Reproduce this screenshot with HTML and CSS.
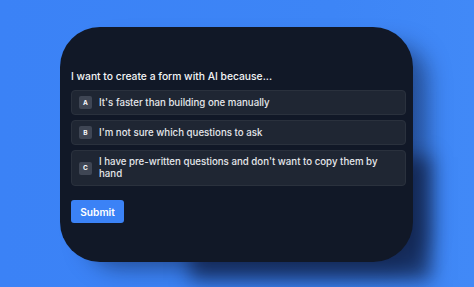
FILE: index.html
```html
<!DOCTYPE html>
<html>
<head>
<meta charset="utf-8">
<link rel="stylesheet" href="styles.css">
</head>
<body>
<div class="card">
  <div class="question">I want to create a form with AI because...</div>
  <div class="options">
    <div class="option"><span class="badge">A</span><span class="label">It's faster than building one manually</span></div>
    <div class="option"><span class="badge">B</span><span class="label">I'm not sure which questions to ask</span></div>
    <div class="option"><span class="badge">C</span><span class="label">I have pre-written questions and don't want to copy them by hand</span></div>
  </div>
  <button class="submit">Submit</button>
</div>
</body>
</html>
```
FILE: styles.css
```css
html, body {
  margin: 0;
  padding: 0;
}
body {
  width: 474px;
  height: 287px;
  overflow: hidden;
  background: linear-gradient(90deg, #3b82f6 0%, #3d85f6 70%, #4189f7 100%);
  font-family: Inter, "Noto Sans", sans-serif;
  padding-top: 27px;
  padding-left: 60px;
  box-sizing: border-box;
}
.card {
  width: 353px;
  height: 235px;
  box-sizing: border-box;
  background: #111827;
  border-radius: 40px;
  padding: 42px 7px 0 11px;
  box-shadow:
    74px 74px 18px -56px rgba(10, 20, 50, 0.65),
    20px 12px 22px -6px rgba(10, 20, 50, 0.5);
}
.question {
  color: #f3f4f6;
  font-size: 10.3px;
  font-weight: 500;
  line-height: 14px;
  margin-bottom: 7px;
}
.options {
  display: flex;
  flex-direction: column;
  gap: 5px;
}
.option {
  display: flex;
  align-items: center;
  gap: 7px;
  padding: 5px 7px;
  background: #1f2633;
  border: 1px solid #2a313d;
  border-radius: 4px;
}
.badge {
  flex: none;
  width: 13px;
  height: 13px;
  border-radius: 2px;
  background: #3f4654;
  color: #f9fafb;
  font-size: 6.5px;
  font-weight: 700;
  display: flex;
  align-items: center;
  justify-content: center;
}
.label {
  color: #e5e7eb;
  font-size: 9.7px;
  font-weight: 500;
  line-height: 12px;
}
.submit {
  margin-top: 14px;
  width: 53px;
  height: 23px;
  border: none;
  border-radius: 3px;
  background: #3b82f6;
  color: #ffffff;
  font-family: Inter, "Noto Sans", sans-serif;
  font-size: 10.2px;
  font-weight: 600;
  padding: 0;
}
```
